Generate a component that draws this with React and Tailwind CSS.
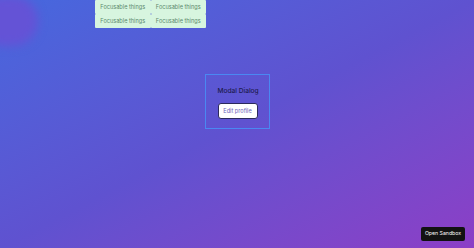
export default function App() {
  const cells = ["Focusable things", "Focusable things", "Focusable things", "Focusable things"];

  return (
    <div className="relative h-[248px] w-full overflow-hidden bg-gradient-to-br from-[#4568de] via-[#5f52d0] to-[#8c3ec6] font-['Inter','Liberation_Sans',sans-serif]">
      {/* soft blob top-left */}
      <div className="absolute -left-[22px] -top-[4px] h-[50px] w-[60px] rounded-full bg-[#6453d6] blur-[5px]"></div>

      <div className="relative flex flex-col">
        {/* focusable grid */}
        <div className="ml-[95px] grid w-[111px] grid-cols-2">
          {cells.map((c, i) => (
            <div
              key={i}
              className="flex h-[14px] items-center justify-center rounded-[1px] bg-[#d7f5df] text-[5.6px] text-[#5c8a6c]"
            >
              {c}
            </div>
          ))}
        </div>

        {/* modal */}
        <div className="mx-auto mt-[46px] flex h-[55px] w-[65px] flex-col items-start border border-[#4a88f2] pl-[12px] pt-[12px]">
          <p className="text-[6.6px] font-medium leading-[9px] text-[#1d1b4f]">Modal Dialog</p>
          <button className="mt-[7px] flex h-[16px] w-[40px] items-center justify-center rounded-[3px] border-[1.5px] border-[#2c2a5c] bg-white text-[5.6px] text-[#6b62b8]">
            Edit profile
          </button>
        </div>
      </div>

      <button className="absolute bottom-[7px] right-[9px] flex h-[14px] w-[44px] items-center justify-center rounded-[2px] bg-[#121212] text-[5.2px] text-white">
        Open Sandbox
      </button>
    </div>
  );
}
